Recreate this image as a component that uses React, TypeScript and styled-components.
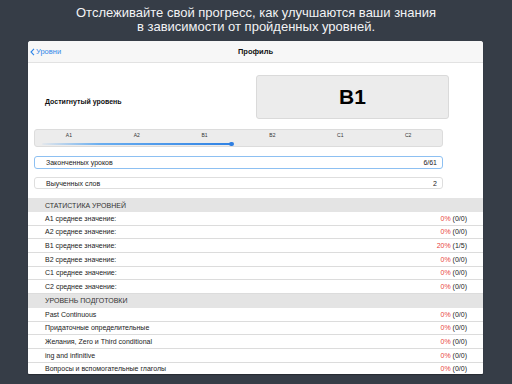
import React from "react";
import styled, { createGlobalStyle } from "styled-components";

const Global = createGlobalStyle`
  html, body { margin: 0; padding: 0; }
  body {
    background: #363d47;
    font-family: "Liberation Sans", Arial, Helvetica, sans-serif;
    -webkit-font-smoothing: antialiased;
  }
`;

const Page = styled.div`
  width: 512px;
  height: 384px;
  overflow: hidden;
  background: #363d47;
  display: flex;
  flex-direction: column;
`;

const Headline = styled.h1`
  margin: 0;
  padding-top: 6px;
  height: 36px;
  box-sizing: border-box;
  font-size: 13px;
  line-height: 14px;
  font-weight: 400;
  color: #f2f3f5;
  text-align: center;
`;

const Card = styled.div`
  margin-left: 28px;
  width: 455px;
  height: 333px;
  margin-top: 5px;
  background: #fff;
  border-radius: 3px 3px 1px 1px;
  overflow: hidden;
  display: flex;
  flex-direction: column;
  box-shadow: 0 1px 1px rgba(0, 0, 0, 0.3);
`;

const NavBar = styled.div`
  height: 21px;
  flex: none;
  background: #f7f7f7;
  border-bottom: 1px solid #e2e2e2;
  display: grid;
  grid-template-columns: 1fr auto 1fr;
  align-items: center;
  font-size: 7.5px;
`;

const Back = styled.span`
  color: #2f86e8;
  display: flex;
  align-items: center;
  gap: 1px;
  padding-left: 2px;
`;

const NavTitle = styled.span`
  font-weight: 700;
  color: #111;
`;

const Hero = styled.div`
  margin-top: 12px;
  display: grid;
  grid-template-columns: 228px 193px;
  align-items: center;
  flex: none;
`;

const HeroLabel = styled.div`
  padding: 8px 0 0 17px;
  font-size: 7px;
  font-weight: 700;
  color: #111;
`;

const LevelBox = styled.div`
  height: 44px;
  box-sizing: border-box;
  background: #ececec;
  border: 1px solid #dadada;
  border-radius: 3px;
  display: flex;
  align-items: center;
  justify-content: center;
  font-size: 21px;
  font-weight: 700;
  color: #000;
`;

const LevelBar = styled.div`
  margin: 10px 0 0 6px;
  width: 409px;
  height: 18px;
  box-sizing: border-box;
  background: #ececec;
  border: 1px solid #dcdcdc;
  border-radius: 3px;
  flex: none;
  display: flex;
  flex-direction: column;
`;

const LevelLabels = styled.div`
  display: grid;
  grid-template-columns: repeat(6, 1fr);
  padding-top: 2px;
  font-size: 5px;
  line-height: 6px;
  color: #333;
  text-align: center;
`;

const Track = styled.div`
  margin: 5px 0 0 7px;
  height: 2px;
  border-radius: 1px;
  background: linear-gradient(to right, rgba(60, 140, 230, 0.05), #6aaef0 30%, #2f82e4);
  position: relative;
  &::after {
    content: "";
    position: absolute;
    right: -1px;
    top: -1px;
    width: 5px;
    height: 4px;
    border-radius: 2px;
    background: #2f7fe2;
  }
`;

const InfoRow = styled.div<{ $active?: boolean; $top: number; $h: number }>`
  margin: ${(p) => p.$top}px 0 0 6px;
  width: 409px;
  height: ${(p) => p.$h}px;
  box-sizing: border-box;
  border: 1px solid ${(p) => (p.$active ? "#8dc0f2" : "#dedede")};
  border-radius: 3px;
  display: flex;
  align-items: center;
  justify-content: space-between;
  padding: 0 5px 0 11px;
  font-size: 7px;
  color: #222;
  flex: none;
`;

const SectionHeader = styled.div<{ $top?: number }>`
  margin-top: ${(p) => p.$top ?? 0}px;
  height: 14px;
  flex: none;
  background: #e4e4e4;
  display: flex;
  align-items: center;
  padding-left: 17px;
  font-size: 7px;
  color: #333;
`;

const ListRow = styled.div`
  height: 13.67px;
  flex: none;
  box-sizing: border-box;
  border-bottom: 1px solid #dcdcdc;
  display: flex;
  align-items: center;
  justify-content: space-between;
  padding: 0 16px 0 17px;
  font-size: 7px;
  color: #1a1a1a;
`;

const Value = styled.span`
  color: #222;
`;

const Percent = styled.span`
  color: #e8413d;
`;

const levels = ["A1", "A2", "B1", "B2", "C1", "C2"];

const stats: [string, string, string][] = [
  ["A1 среднее значение:", "0%", "(0/0)"],
  ["A2 среднее значение:", "0%", "(0/0)"],
  ["B1 среднее значение:", "20%", "(1/5)"],
  ["B2 среднее значение:", "0%", "(0/0)"],
  ["C1 среднее значение:", "0%", "(0/0)"],
  ["C2 среднее значение:", "0%", "(0/0)"],
];

const topics = [
  "Past Continuous",
  "Придаточные определительные",
  "Желания, Zero и Third conditional",
  "ing and infinitive",
  "Вопросы и вспомогательные глаголы",
];

export default function App() {
  const progressWidth = 191;
  return (
    <>
      <Global />
      <Page>
        <Headline>
          Отслеживайте свой прогресс, как улучшаются ваши знания
          <br />в зависимости от пройденных уровней.
        </Headline>
        <Card>
          <NavBar>
            <Back>
              <svg width="5" height="8" viewBox="0 0 5 8">
                <path d="M4 0.8 L1 4 L4 7.2" stroke="#2f86e8" strokeWidth="1.1" fill="none" />
              </svg>
              Уровни
            </Back>
            <NavTitle>Профиль</NavTitle>
            <span />
          </NavBar>
          <Hero>
            <HeroLabel>Достигнутый уровень</HeroLabel>
            <LevelBox>B1</LevelBox>
          </Hero>
          <LevelBar>
            <LevelLabels>
              {levels.map((l) => (
                <span key={l}>{l}</span>
              ))}
            </LevelLabels>
            <Track style={{ width: progressWidth }} />
          </LevelBar>
          <InfoRow $active $top={9} $h={13}>
            <span>Законченных уроков</span>
            <span>6/61</span>
          </InfoRow>
          <InfoRow $top={8} $h={12}>
            <span>Выученных слов</span>
            <span>2</span>
          </InfoRow>
          <SectionHeader $top={9}>СТАТИСТИКА УРОВНЕЙ</SectionHeader>
          {stats.map(([label, pct, frac]) => (
            <ListRow key={label}>
              <span>{label}</span>
              <Value>
                <Percent>{pct}</Percent> {frac}
              </Value>
            </ListRow>
          ))}
          <SectionHeader>УРОВЕНЬ ПОДГОТОВКИ</SectionHeader>
          {topics.map((t) => (
            <ListRow key={t}>
              <span>{t}</span>
              <Value>
                <Percent>0%</Percent> (0/0)
              </Value>
            </ListRow>
          ))}
        </Card>
      </Page>
    </>
  );
}
